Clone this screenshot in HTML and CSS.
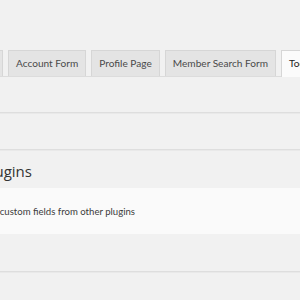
FILE: index.html
```html
<!DOCTYPE html>
<html>
<head>
<meta charset="utf-8">
<link rel="stylesheet" href="styles.css">
</head>
<body>
<div class="wrap">
  <nav class="tabs">
    <a class="tab tab-cut">General</a>
    <a class="tab">Account Form</a>
    <a class="tab">Profile Page</a>
    <a class="tab">Member Search Form</a>
    <a class="tab tab-active">Tools</a>
  </nav>
  <div class="sep sep-a"></div>
  <div class="sep sep-b"></div>
  <h2 class="title">Import from Plugins</h2>
  <div class="row">
    <span class="row-text">Import custom fields from other plugins</span>
  </div>
  <div class="sep sep-c"></div>
</div>
</body>
</html>
```

FILE: styles.css
```css
html, body {
  margin: 0;
  padding: 0;
  background: #f1f1f1;
  font-family: "Open Sans", "Noto Sans", sans-serif;
  overflow: hidden;
  width: 300px;
  height: 300px;
}
.wrap {
  padding-top: 50px;
}
.tabs {
  display: flex;
  gap: 5px;
  margin-left: -60px;
  height: 26px;
  border-bottom: 1px solid #dcdcdc;
  white-space: nowrap;
}
.tab {
  display: block;
  box-sizing: border-box;
  height: 26px;
  padding: 0 7px;
  border: 1px solid #d6d6d6;
  border-bottom: none;
  background: #e4e4e4;
  color: #4a4a4a;
  font-family: Lato, "Open Sans", sans-serif;
  font-size: 10.1px;
  font-weight: 400;
  line-height: 25px;
  flex: none;
}
.tab-cut {
  width: 63px;
  overflow: hidden;
  color: transparent;
}
.tab-active {
  background: #fbfbfb;
  height: 27px;
  color: #222;
}
.sep {
  height: 0;
  border-top: 1px solid #dedede;
  border-bottom: 1px solid #e9e9e9;
}
.sep-a {
  margin-top: 35px;
}
.sep-b {
  margin-top: 35px;
}
.title {
  margin: 0;
  padding: 11px 0 0 0;
  margin-left: -108px;
  height: 29px;
  box-sizing: border-box;
  font-size: 15px;
  font-weight: 400;
  color: #333;
  line-height: 18px;
}
.row {
  margin-top: 8px;
  background: #fafafa;
  height: 46px;
  display: flex;
  align-items: center;
  margin-left: -31px;
}
.row-text {
  font-family: Lato, "Open Sans", sans-serif;
  font-size: 9.6px;
  color: #3c3c3c;
}
.sep-c {
  margin-top: 37px;
}
```
